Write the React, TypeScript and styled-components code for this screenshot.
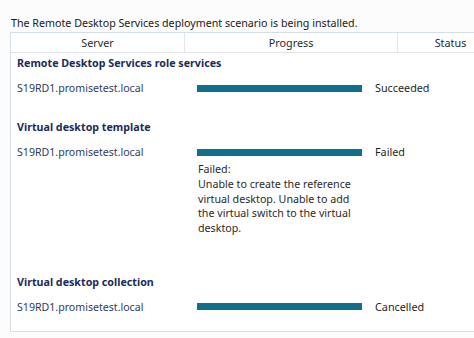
import React from "react";
import styled, { createGlobalStyle } from "styled-components";

const Global = createGlobalStyle`
  html, body { margin: 0; padding: 0; }
  body {
    background: #fcfcfc;
    font-family: "Noto Sans", "Open Sans", sans-serif;
    overflow: hidden;
    width: 474px;
    height: 338px;
  }
`;

const Page = styled.div`
  padding: 14px 0 0 10px;
`;

const Intro = styled.div`
  font-size: 10.7px;
  line-height: 18px;
  color: #1a1a1a;
  padding-left: 1px;
  white-space: nowrap;
`;

const Panel = styled.div`
  width: 500px;
  background: #fff;
  border: 1px solid #d6dfe5;
  border-right: none;
`;

const Header = styled.div`
  display: grid;
  grid-template-columns: 174px 213px 105px;
  height: 19px;
  border-bottom: 1px solid #e2e5e8;
`;

const HeaderCell = styled.div<{ $last?: boolean }>`
  font-size: 10.8px;
  line-height: 19px;
  color: #2a2a2a;
  text-align: center;
  border-right: ${(p) => (p.$last ? "none" : "1px solid #e4e6e8")};
`;

const Body = styled.div`
  padding: 2px 0 16px 6px;
`;

const Section = styled.div<{ $gap: number }>`
  margin-top: ${(p) => p.$gap}px;
`;

const SectionTitle = styled.div`
  font-size: 10.7px;
  font-weight: 700;
  line-height: 16px;
  color: #1c2a5a;
  white-space: nowrap;
`;

const ItemRow = styled.div`
  display: grid;
  grid-template-columns: 167px 165px auto;
  column-gap: 13px;
  margin-top: 9px;
  align-items: start;
`;

const Server = styled.div`
  font-size: 10.6px;
  line-height: 16px;
  color: #2b3c66;
  white-space: nowrap;
`;

const ProgressCell = styled.div`
  display: flex;
  flex-direction: column;
`;

const BarTrack = styled.div`
  height: 16px;
  display: flex;
  align-items: center;
`;

const Bar = styled.div`
  width: 100%;
  height: 7px;
  background: #0f6f8d;
`;

const Message = styled.div`
  margin-top: 2px;
  padding-left: 1px;
  font-size: 10.7px;
  line-height: 14.75px;
  color: #2a2a2a;
  white-space: nowrap;
`;

const Status = styled.div`
  font-size: 10.8px;
  line-height: 16px;
  color: #1f1f1f;
`;

type Item = {
  title: string;
  server: string;
  status: string;
  message?: string[];
  gap: number;
};

const items: Item[] = [
  {
    title: "Remote Desktop Services role services",
    server: "S19RD1.promisetest.local",
    status: "Succeeded",
    gap: 0,
  },
  {
    title: "Virtual desktop template",
    server: "S19RD1.promisetest.local",
    status: "Failed",
    message: [
      "Failed:",
      "Unable to create the reference",
      "virtual desktop. Unable to add",
      "the virtual switch to the virtual",
      "desktop.",
    ],
    gap: 23,
  },
  {
    title: "Virtual desktop collection",
    server: "S19RD1.promisetest.local",
    status: "Cancelled",
    gap: 38,
  },
];

export default function App() {
  return (
    <>
      <Global />
      <Page>
        <Intro>The Remote Desktop Services deployment scenario is being installed.</Intro>
        <Panel>
          <Header>
            <HeaderCell>Server</HeaderCell>
            <HeaderCell>Progress</HeaderCell>
            <HeaderCell $last>Status</HeaderCell>
          </Header>
          <Body>
            {items.map((it) => (
              <Section key={it.title} $gap={it.gap}>
                <SectionTitle>{it.title}</SectionTitle>
                <ItemRow>
                  <Server>{it.server}</Server>
                  <ProgressCell>
                    <BarTrack>
                      <Bar />
                    </BarTrack>
                    {it.message && (
                      <Message>
                        {it.message.map((l) => (
                          <div key={l}>{l}</div>
                        ))}
                      </Message>
                    )}
                  </ProgressCell>
                  <Status>{it.status}</Status>
                </ItemRow>
              </Section>
            ))}
          </Body>
        </Panel>
      </Page>
    </>
  );
}
